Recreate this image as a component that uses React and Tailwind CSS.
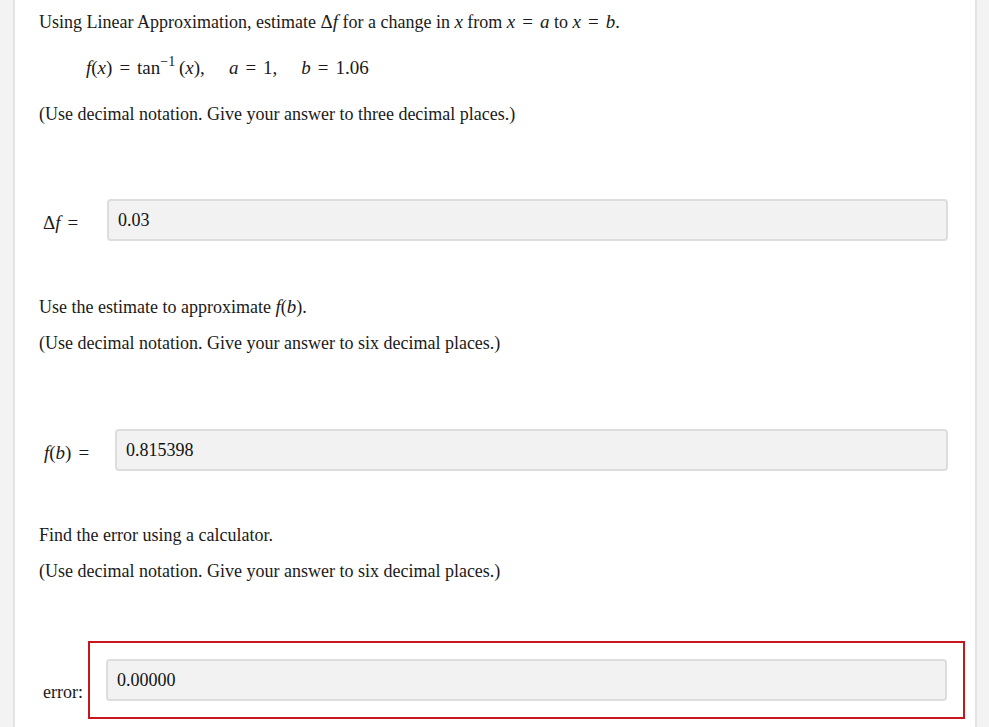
import React from 'react';

const serif = { fontFamily: '"Liberation Serif", "Times New Roman", serif' };

function M({ children }) {
  return <i className="italic text-[19px]">{children}</i>;
}

function Eq() {
  return <span className="inline-block mx-[7px] text-[19px]">=</span>;
}

function AnswerBox({ value }) {
  return (
    <div className="flex-1 h-[42px] flex items-center rounded-[4px] border-2 border-[#dddddd] bg-[#f2f2f2] pl-[9px] text-[18px] text-[#111]">
      {value}
    </div>
  );
}

export default function App() {
  return (
    <div className="min-h-screen bg-[#f3f3f3] flex" style={serif}>
      <div className="ml-[13px] w-[964px] min-h-[727px] bg-white border-l-2 border-r-2 border-[#e4e4e4] pl-[24px] pr-[27px] pt-[10px] text-[18px] leading-[24px] text-[#1a1a1a]">
        <p>
          Using Linear Approximation, estimate <span className="text-[19px]">Δ</span>
          <M>f</M> for a change in <M>x</M> from <M>x</M>
          <Eq />
          <M>a</M> to <M>x</M>
          <Eq />
          <M>b</M>.
        </p>
        <p className="mt-[22px] pl-[47px] text-[19px]">
          <M>f</M>(<M>x</M>)
          <Eq />
          tan<span className="relative -top-[8px] text-[14px]">−1</span>&thinsp;(<M>x</M>),
          <span className="ml-[24px]">
            <M>a</M>
            <Eq />
            1,
          </span>
          <span className="ml-[24px]">
            <M>b</M>
            <Eq />
            1.06
          </span>
        </p>
        <p className="mt-[20px]">(Use decimal notation. Give your answer to three decimal places.)</p>

        <div className="mt-[73px] flex items-center">
          <div className="w-[68px] pl-[4px] pt-[5px]">
            <span className="text-[19px]">Δ</span>
            <M>f</M>
            <Eq />
          </div>
          <AnswerBox value="0.03" />
        </div>

        <p className="mt-[54px]">
          Use the estimate to approximate <M>f</M>(<M>b</M>).
        </p>
        <p className="mt-[12px]">(Use decimal notation. Give your answer to six decimal places.)</p>

        <div className="mt-[74px] flex items-center">
          <div className="w-[76px] pl-[5px] pt-[5px] text-[19px]">
            <M>f</M>(<M>b</M>)
            <Eq />
          </div>
          <AnswerBox value="0.815398" />
        </div>

        <p className="mt-[52px]">Find the error using a calculator.</p>
        <p className="mt-[12px]">(Use decimal notation. Give your answer to six decimal places.)</p>

        <div className="mt-[58px] flex items-end -mr-[17px]">
          <div className="w-[49px] pl-[4px] pb-[17px] leading-[20px]">error:</div>
          <div className="flex-1 flex border-2 border-[#c8161e] px-[16px] py-[16px]">
            <AnswerBox value="0.00000" />
          </div>
        </div>
      </div>
    </div>
  );
}
